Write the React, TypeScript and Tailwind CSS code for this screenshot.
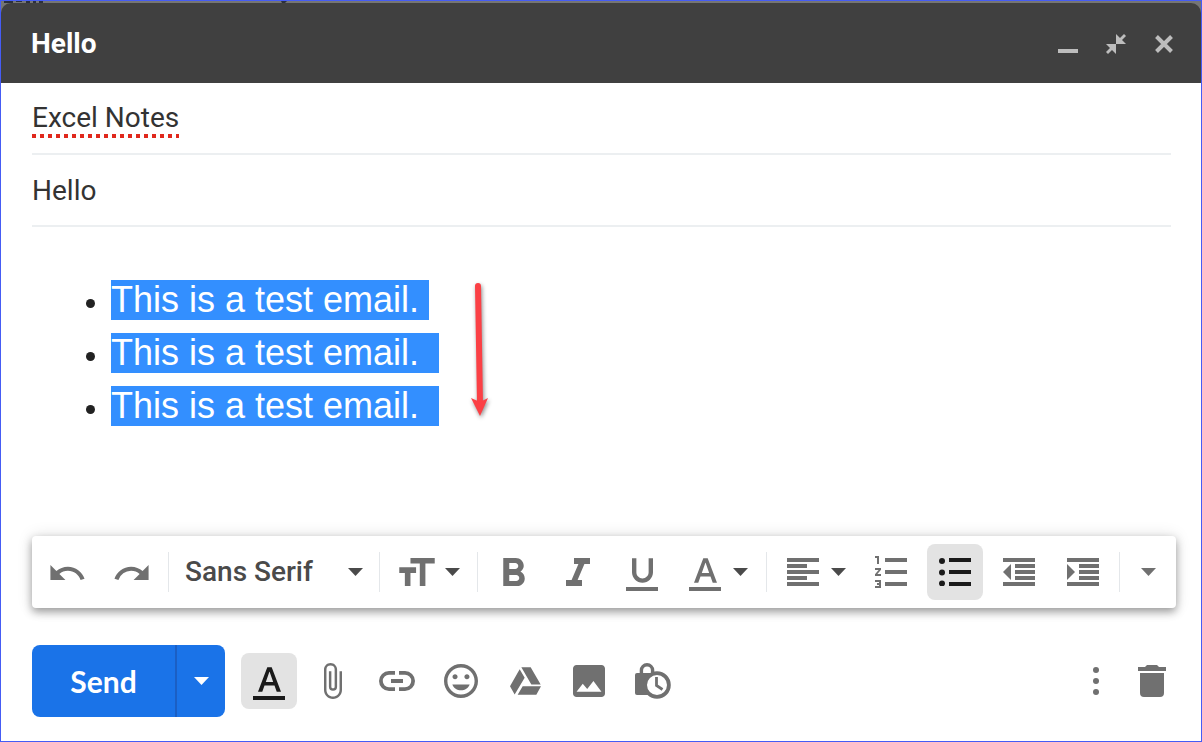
import { useState, type ReactNode } from "react";
import {
  MdAttachFile,
  MdFormatBold,
  MdFormatColorText,
  MdFormatItalic,
  MdFormatListNumbered,
  MdFormatSize,
  MdFormatUnderlined,
  MdImage,
  MdMood,
  MdRedo,
  MdUndo,
} from "react-icons/md";

type IconButtonProps = {
  label: string;
  active?: boolean;
  onClick?: () => void;
  children: ReactNode;
};

// "\u00a0" keeps the trailing space inside the highlight
const lines = [
  "This is a test email.\u00a0",
  "This is a test email.\u00a0\u00a0",
  "This is a test email.\u00a0\u00a0",
];

function IconButton({ label, active, onClick, children }: IconButtonProps) {
  return (
    <button
      type="button"
      aria-label={label}
      onClick={onClick}
      className={`flex h-14 w-14 shrink-0 items-center justify-center rounded-lg ${
        active ? "bg-[#e3e3e3] text-[#1a1a1a]" : "text-[#707070]"
      }`}
    >
      {children}
    </button>
  );
}

function Separator() {
  return <span className="h-10 w-px shrink-0 bg-[#e4e7ea]" />;
}

function Caret() {
  return (
    <svg viewBox="0 0 15 8" className="h-2 w-[15px] shrink-0" fill="currentColor">
      <path d="M0 0h15L7.5 8z" />
    </svg>
  );
}

function AlignLeftIcon() {
  return (
    <svg viewBox="0 0 32 28" className="h-7 w-8" fill="currentColor">
      <path d="M0 0h32v4H0zM0 6h20v4H0zM0 12h32v4H0zM0 18h20v4H0zM0 24h32v4H0z" />
    </svg>
  );
}

function BulletListIcon() {
  return (
    <svg viewBox="0 0 32 28" className="h-7 w-8" fill="currentColor">
      <path d="M10 0h22v4H10zM10 12h22v4H10zM10 24h22v4H10z" />
      <circle cx="3" cy="3" r="3" />
      <circle cx="3" cy="14.4" r="3" />
      <circle cx="3" cy="25.4" r="3" />
    </svg>
  );
}

function IndentIcon({ outdent }: { outdent?: boolean }) {
  return (
    <svg viewBox="0 0 32 28" className="h-7 w-8" fill="currentColor">
      <path d="M0 0h32v4H0zM12 6h20v4H12zM12 12h20v4H12zM12 18h20v4H12zM0 24h32v4H0z" />
      <path d={outdent ? "M8 6v16L0 14z" : "M0 6v16l8-8z"} />
    </svg>
  );
}

function UnderlinedIcon() {
  return (
    <span className="flex flex-col items-center gap-1 pt-1">
      <MdFormatUnderlined viewBox="6 3 12 14" className="h-[25px] w-[21px]" />
      <span className="h-1 w-8 bg-current" />
    </span>
  );
}

function TextColorIcon() {
  return (
    <span className="flex flex-col items-center gap-1 pt-1">
      <MdFormatColorText viewBox="5.49 3 13.02 14" className="h-[25px] w-[23px]" />
      <span className="h-1 w-8 bg-current" />
    </span>
  );
}

function LinkIcon() {
  return (
    <svg viewBox="0 0 36 20" className="h-5 w-9" fill="none" stroke="currentColor" strokeWidth="3.8">
      <path d="M16 1.9h-6a8.1 8.1 0 0 0 0 16.2h6M20 1.9h6a8.1 8.1 0 0 1 0 16.2h-6M12 10h12" />
    </svg>
  );
}

function DriveIcon() {
  return (
    <svg viewBox="0 0 93 83" className="h-7 w-[31px]" fill="currentColor">
      <path d="M34 0h28l30 52H64zM29 6l15 26-30 50L0 57zM38 57h55L79 83H23z" />
    </svg>
  );
}

function ConfidentialIcon() {
  return (
    <svg viewBox="0 0 36 36" className="h-9 w-9" fill="none" stroke="currentColor">
      <path d="M2 10h20v22H2a2 2 0 0 1-2-2V12a2 2 0 0 1 2-2z" fill="currentColor" stroke="none" />
      <path d="M6.4 11V7.300a5.600 5.600 0 0 1 11.200 0V11" strokeWidth="3.400" />
      <circle cx="22" cy="22" r="11.900" fill="white" strokeWidth="3.800" />
      <path d="M21.500 14v8.500l6 4" strokeWidth="2.800" />
    </svg>
  );
}

function MoreIcon() {
  return (
    <svg viewBox="0 0 6 28" className="h-7 w-[6px]" fill="currentColor">
      <circle cx="3" cy="3" r="3" />
      <circle cx="3" cy="14" r="3" />
      <circle cx="3" cy="25" r="3" />
    </svg>
  );
}

function TrashIcon() {
  return (
    <svg viewBox="0 0 28 32" className="h-8 w-7" fill="currentColor">
      <path d="M0 2h7l2-2h10l2 2h7v4H0zM2 8h24v20a4 4 0 0 1-4 4H6a4 4 0 0 1-4-4z" />
    </svg>
  );
}

function WindowControls() {
  return (
    <div className="flex text-[#bdbdbd]">
      <button type="button" aria-label="Minimize" className="flex h-12 w-12 items-center justify-center">
        <svg viewBox="0 0 20 20" className="h-5 w-5" fill="currentColor">
          <path d="M0 15h20v4H0z" />
        </svg>
      </button>
      <button type="button" aria-label="Exit full screen" className="flex h-12 w-12 items-center justify-center">
        <svg viewBox="0 0 20 20" className="h-5 w-5" fill="currentColor">
          <path d="M10 0v10h10l-4-4 4-4-2-2-4 4zM0 10h10v10l-4-4-4 4-2-2 4-4z" />
        </svg>
      </button>
      <button type="button" aria-label="Close" className="flex h-12 w-12 items-center justify-center">
        <svg viewBox="0 0 18 18" className="h-[18px] w-[18px]" stroke="currentColor" strokeWidth="4">
          <path d="M1.500 1.500l15 15M16.500 1.500l-15 15" />
        </svg>
      </button>
    </div>
  );
}

// Red arrow pointing down the selected lines
function DownArrow() {
  return (
    <svg viewBox="0 0 24 144" className="h-36 w-6 shrink-0 drop-shadow-[1px_2px_2px_rgba(0,0,0,0.45)]">
      <path d="M10 6l2 118" stroke="#fb4045" strokeWidth="6" strokeLinecap="round" />
      <path d="M3 118l9 4 8-4-8 18z" fill="#fb4045" />
    </svg>
  );
}

export default function App() {
  const [subject, setSubject] = useState("Hello");
  const [bullets, setBullets] = useState(true);
  const [showFormat, setShowFormat] = useState(true);

  return (
    <div className="flex min-h-screen flex-col border border-[#455cf5] bg-white font-['Roboto',sans-serif]">
      {/* Header, with a sliver of the inbox behind it */}
      <div className="bg-[#757575]">
        <svg className="block h-[2px] w-full" fill="#2c303c">
          <path d="M3 0h9v2H3zM15 0h6v1h-6zM25 0h4v2h-4zM32 0h3v2h-3zM38 0h4v2h-4zM280 0h6l-2 2h-3z" />
        </svg>
        <header className="flex h-20 items-center justify-between rounded-t-[10px] bg-[#404040] pt-px pr-[13px] pl-[30px]">
          <h1 className="text-[28px] font-bold text-white">{subject}</h1>
          <WindowControls />
        </header>
      </div>

      {/* Recipient and subject */}
      <div className="pr-[30px] pl-[31px] text-[28px] text-[#333]">
        <div className="flex h-[72px] items-center border-b-2 border-[#eceff1]">
          <button type="button" aria-label="Edit recipient" className="flex flex-col pt-1 leading-8">
            Excel Notes
            <span className="h-1 w-full bg-[repeating-linear-gradient(90deg,#e0281c_0_4px,transparent_4px_8px)]" />
          </button>
        </div>
        <div className="flex h-[72px] items-center border-b-2 border-[#eceff1]">
          <input
            aria-label="Subject"
            value={subject}
            onChange={(e) => setSubject(e.target.value)}
            className="w-full pt-px leading-8 outline-none"
          />
        </div>
      </div>

      {/* Message */}
      <main className="flex flex-1 items-start pt-[53px] pb-8 pl-[85px]">
        <ul className="flex flex-col gap-[13px]">
          {lines.map((line, i) => (
            <li key={i} className="flex items-center gap-4">
              {bullets && <span className="mt-[6px] h-[9px] w-[9px] rounded-full bg-[#222]" />}
              <span className="bg-[#338fff] font-['Liberation_Sans',Arial,sans-serif] text-[36px] leading-10 text-white">
                {line}
              </span>
            </li>
          ))}
        </ul>
        <div className="ml-[29px]">
          <DownArrow />
        </div>
      </main>

      {/* Formatting toolbar */}
      {showFormat && (
        <div className="mr-[25px] mb-[37px] ml-[31px] flex h-[72px] items-center gap-2 rounded bg-white pl-[7px] text-[#707070] shadow-[0_4px_8px_rgba(0,0,0,0.35),0_0_16px_rgba(0,0,0,0.12)]">
          <IconButton label="Undo">
            <MdUndo viewBox="2 7 20.5 9" className="h-[15px] w-[35px]" />
          </IconButton>
          <IconButton label="Redo">
            <MdRedo viewBox="1.5 7 20.5 9" className="h-[15px] w-[35px]" />
          </IconButton>
          <div className="flex items-center pl-px">
            <Separator />
            <div className="grid w-[210px] items-center text-[#4a4a4a]">
              <select
                aria-label="Font"
                className="col-start-1 row-start-1 h-14 w-full appearance-none bg-transparent pl-4 text-[28px] font-medium outline-none"
              >
                <option>Sans Serif</option>
                <option>Serif</option>
                <option>Fixed Width</option>
              </select>
              <span className="pointer-events-none col-start-1 row-start-1 justify-self-end pr-4">
                <Caret />
              </span>
            </div>
            <Separator />
            <button type="button" aria-label="Size" className="flex h-14 w-[97px] items-center gap-[10px] pl-[19px]">
              <MdFormatSize viewBox="3 4 19 15" className="h-7 w-9" />
              <span className="text-[#4a4a4a]">
                <Caret />
              </span>
            </button>
            <Separator />
          </div>
          <IconButton label="Bold">
            <MdFormatBold viewBox="7 4 10.75 14" className="h-7 w-[22px]" />
          </IconButton>
          <IconButton label="Italic">
            <MdFormatItalic viewBox="6 4 12 14" className="h-7 w-6" />
          </IconButton>
          <IconButton label="Underline">
            <UnderlinedIcon />
          </IconButton>
          <button type="button" aria-label="Text color" className="flex h-14 w-20 items-center gap-3 pl-[11px]">
            <TextColorIcon />
            <span className="text-[#4a4a4a]">
              <Caret />
            </span>
          </button>
          <Separator />
          <button type="button" aria-label="Align" className="flex h-14 w-20 items-center gap-3 pl-3">
            <AlignLeftIcon />
            <span className="text-[#4a4a4a]">
              <Caret />
            </span>
          </button>
          <IconButton label="Numbered list">
            <MdFormatListNumbered viewBox="2 4 16 16" className="h-8 w-8" />
          </IconButton>
          <IconButton label="Bulleted list" active={bullets} onClick={() => setBullets(!bullets)}>
            <BulletListIcon />
          </IconButton>
          <IconButton label="Indent less">
            <IndentIcon outdent />
          </IconButton>
          <IconButton label="Indent more">
            <IndentIcon />
          </IconButton>
          <div className="flex items-center">
            <Separator />
            <IconButton label="More formatting options">
              <Caret />
            </IconButton>
          </div>
        </div>
      )}

      {/* Send bar */}
      <footer className="flex items-center justify-between pr-[21px] pb-6 pl-[31px]">
        <div className="flex items-center gap-4">
          <div className="flex h-[72px] overflow-hidden rounded-lg bg-[#1a73e8] text-white">
            <button
              type="button"
              className="w-[145px] border-r-2 border-[#1b5fc4] font-['Lato',sans-serif] text-[30px] font-bold"
            >
              Send
            </button>
            <button type="button" aria-label="More send options" className="flex w-12 items-center justify-center">
              <Caret />
            </button>
          </div>
          <div className="flex gap-2">
            <IconButton label="Formatting options" active={showFormat} onClick={() => setShowFormat(!showFormat)}>
              <TextColorIcon />
            </IconButton>
            <IconButton label="Attach files">
              <MdAttachFile viewBox="7 1 11 22" className="h-9 w-[18px]" />
            </IconButton>
            <IconButton label="Insert link">
              <LinkIcon />
            </IconButton>
            <IconButton label="Insert emoji">
              <MdMood viewBox="2 2 20 20" className="h-[34px] w-[34px]" />
            </IconButton>
            <IconButton label="Insert files using Drive">
              <DriveIcon />
            </IconButton>
            <IconButton label="Insert photo">
              <MdImage viewBox="3 3 18 18" className="h-8 w-8" />
            </IconButton>
            <IconButton label="Toggle confidential mode">
              <ConfidentialIcon />
            </IconButton>
          </div>
        </div>
        <div className="flex">
          <IconButton label="More options">
            <MoreIcon />
          </IconButton>
          <IconButton label="Discard draft">
            <TrashIcon />
          </IconButton>
        </div>
      </footer>
    </div>
  );
}
